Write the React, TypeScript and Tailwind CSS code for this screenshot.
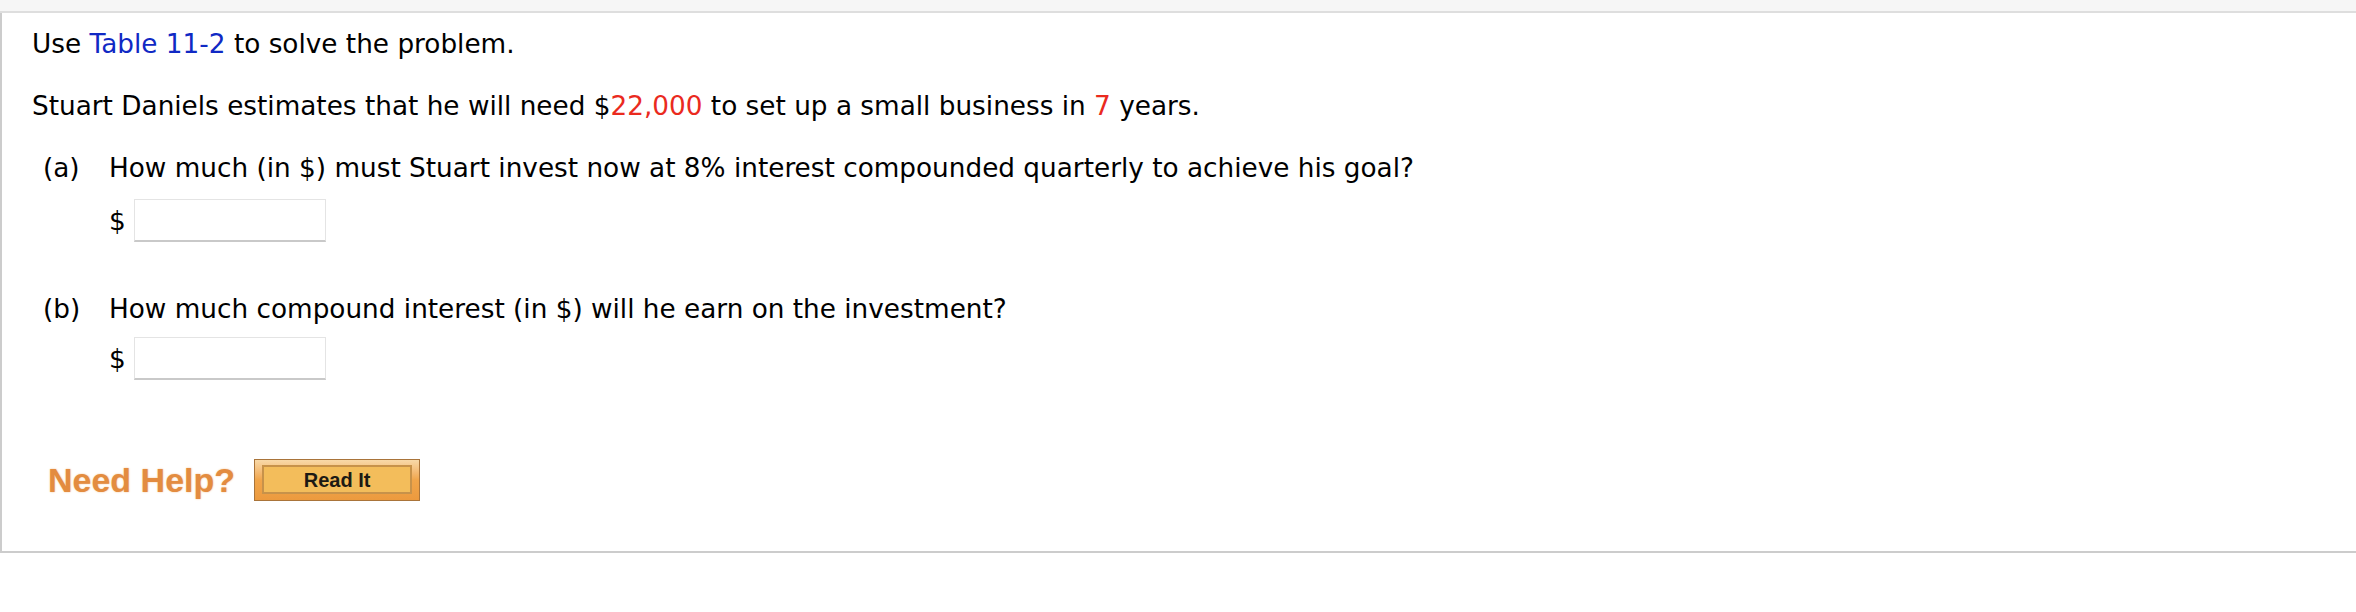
export default function App() {
  return (
    <div className="min-h-[612px] w-[2356px] bg-white font-['DejaVu_Sans',Verdana,sans-serif] text-[26.3px] text-black">
      {/* top strip */}
      <div className="h-[13px] bg-[#f6f6f6] border-b-2 border-[#dedede]" />

      {/* question panel */}
      <div className="h-[540px] border-l-2 border-b-2 border-[#cccccc] pl-[30px] pt-[15px]">
        <p className="leading-[32px]">
          Use <span className="text-[#1029c4]">Table 11-2</span> to solve the problem.
        </p>

        <p className="leading-[32px] mt-[30px]">
          Stuart Daniels estimates that he will need $<span className="text-[#ea2a1e]">22,000</span> to set up a
          small business in <span className="text-[#ea2a1e]">7</span> years.
        </p>

        {/* part a */}
        <div className="flex mt-[30px] leading-[32px]">
          <span className="w-[77px] pl-[11px]">(a)</span>
          <span>How much (in $) must Stuart invest now at 8% interest compounded quarterly to achieve his goal?</span>
        </div>
        <div className="flex items-center ml-[77px] mt-[15px]">
          <span className="w-[25px] leading-[32px]">$</span>
          <div className="w-[192px] h-[43px] bg-white border border-[#e4e4e4] border-b-2 border-b-[#c9c9c9]" />
        </div>

        {/* part b */}
        <div className="flex mt-[51px] leading-[32px]">
          <span className="w-[77px] pl-[11px]">(b)</span>
          <span>How much compound interest (in $) will he earn on the investment?</span>
        </div>
        <div className="flex items-center ml-[77px] mt-[12px]">
          <span className="w-[25px] leading-[32px]">$</span>
          <div className="w-[192px] h-[43px] bg-white border border-[#e4e4e4] border-b-2 border-b-[#c9c9c9]" />
        </div>

        {/* help */}
        <div className="flex items-center mt-[79px] ml-[16px]">
          <span className="font-['Liberation_Sans',Arial,sans-serif] font-bold text-[34px] leading-[40px] text-[#e38c40] [text-shadow:0_0_2px_#f3c08f]">
            Need Help?
          </span>
          <button className="ml-[19px] w-[166px] h-[42px] border border-[#a9743a] bg-gradient-to-b from-[#f8d9a8] via-[#f0a54a] to-[#ec9a3e] p-[5px_7px_6px_7px]">
            <div className="h-full w-full flex items-center justify-center border-2 border-[#c7924a] bg-[#f3bd5b] font-['Liberation_Sans',Arial,sans-serif] font-bold text-[20px] text-[#1c1a14]">
              Read It
            </div>
          </button>
        </div>
      </div>
    </div>
  );
}
